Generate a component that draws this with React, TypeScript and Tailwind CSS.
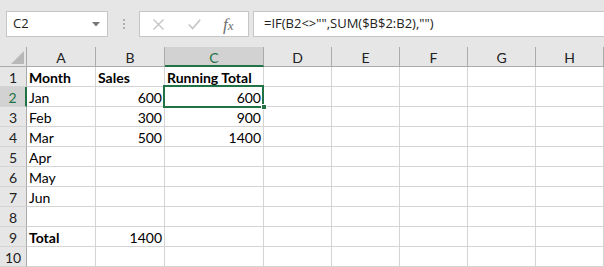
import React from "react";

const COLS = ["A", "B", "C", "D", "E", "F", "G", "H"];

type Cell = { v: string; bold?: boolean; right?: boolean };

const rows: Record<number, Record<string, Cell>> = {
  1: { A: { v: "Month", bold: true }, B: { v: "Sales", bold: true }, C: { v: "Running Total", bold: true } },
  2: { A: { v: "Jan" }, B: { v: "600", right: true }, C: { v: "600", right: true } },
  3: { A: { v: "Feb" }, B: { v: "300", right: true }, C: { v: "900", right: true } },
  4: { A: { v: "Mar" }, B: { v: "500", right: true }, C: { v: "1400", right: true } },
  5: { A: { v: "Apr" } },
  6: { A: { v: "May" } },
  7: { A: { v: "Jun" } },
  8: {},
  9: { A: { v: "Total", bold: true }, B: { v: "1400", right: true } },
  10: {},
};

function Toolbar() {
  return (
    <div className="h-[47px] bg-[#e6e6e6] pt-[11px] flex items-start font-['Open_Sans',sans-serif]">
      {/* name box */}
      <div className="ml-[6px] w-[102px] h-[26px] bg-white border border-[#c6c6c6] flex items-center pl-[6px] pr-[7px] text-[13px] text-[#222]">
        <span className="flex-1">C2</span>
        <svg width="8" height="5" viewBox="0 0 8 5">
          <path d="M0 0h8L4 4.5z" fill="#777" />
        </svg>
      </div>
      {/* dots */}
      <div className="w-[31px] h-[26px] flex flex-col items-center justify-center gap-[2px]">
        <span className="w-[2px] h-[2px] bg-[#b0b0b0]" />
        <span className="w-[2px] h-[2px] bg-[#b0b0b0]" />
        <span className="w-[2px] h-[2px] bg-[#b0b0b0]" />
      </div>
      {/* buttons */}
      <div className="w-[110px] h-[26px] bg-white border border-[#c6c6c6] flex items-center">
        <svg className="ml-[13px]" width="11" height="11" viewBox="0 0 11 11">
          <path d="M0.5 0.5l10 10M10.5 0.5l-10 10" stroke="#c4c4c4" strokeWidth="1.4" />
        </svg>
        <svg className="ml-[24px]" width="13" height="11" viewBox="0 0 13 11">
          <path d="M0.8 5.5l3.8 4L12.2 0.8" stroke="#c4c4c4" strokeWidth="1.6" fill="none" />
        </svg>
        <span className="ml-[22px] font-['Liberation_Serif',serif] italic text-[17px] text-[#6e6e6e] leading-none">
          f<span className="text-[13px]">x</span>
        </span>
      </div>
      {/* formula */}
      <div className="ml-[4px] flex-1 h-[26px] bg-white border border-[#c6c6c6] border-r-0 flex items-center pl-[10px] text-[13px] text-[#222]">
        =IF(B2&lt;&gt;"",SUM($B$2:B2),"")
      </div>
    </div>
  );
}

export default function App() {
  return (
    <div className="w-[604px] h-[267px] overflow-hidden bg-white relative">
      <Toolbar />
      <div className="grid grid-cols-[27px_69px_69px_99px_68px_68px_68px_68px_68px] font-['Lato',sans-serif] text-[14px] text-black">
        {/* header row */}
        <div className="h-[20px] bg-[#e6e6e6] border-r border-b border-[#ababab] flex items-end justify-end pr-[2px] pb-[2px]">
          <svg width="13" height="13" viewBox="0 0 13 13">
            <path d="M13 0v13H0z" fill="#b8b8b8" />
          </svg>
        </div>
        {COLS.map((c) =>
          c === "C" ? (
            <div
              key={c}
              className="h-[20px] bg-[#d2d2d2] border-r border-[#ababab] border-b-2 border-b-[#217346] flex items-center justify-center text-[#217346] pt-[2px]"
            >
              {c}
            </div>
          ) : (
            <div
              key={c}
              className="h-[20px] bg-[#e6e6e6] border-r border-b border-[#ababab] flex items-center justify-center text-[#222] pt-[2px]"
            >
              {c}
            </div>
          )
        )}
        {Array.from({ length: 10 }, (_, i) => i + 1).map((r) => (
          <React.Fragment key={r}>
            {r === 2 ? (
              <div className="h-[20px] bg-[#d2d2d2] border-r-2 border-r-[#217346] border-b border-[#d4d4d4] flex items-center justify-center text-[#217346] pt-[2px]">
                {r}
              </div>
            ) : (
              <div className="h-[20px] bg-[#e6e6e6] border-r border-[#ababab] border-b border-b-[#d4d4d4] flex items-center justify-center text-[#222] pt-[2px]">
                {r}
              </div>
            )}
            {COLS.map((c) => {
              const cell = rows[r][c];
              return (
                <div
                  key={c}
                  className={
                    "h-[20px] border-r border-b border-[#d4d4d4] flex items-center px-[2px] pt-[2px] whitespace-nowrap " +
                    (cell?.right ? "justify-end " : "") +
                    (cell?.bold ? "font-bold" : "")
                  }
                >
                  {cell?.v}
                </div>
              );
            })}
          </React.Fragment>
        ))}
      </div>
      {/* active cell selection */}
      <div className="absolute left-[163px] top-[85px] w-[101px] h-[23px] border-2 border-[#217346] pointer-events-none" />
      <div className="absolute left-[261px] top-[104px] w-[6px] h-[6px] bg-[#217346] border border-white" />
    </div>
  );
}
